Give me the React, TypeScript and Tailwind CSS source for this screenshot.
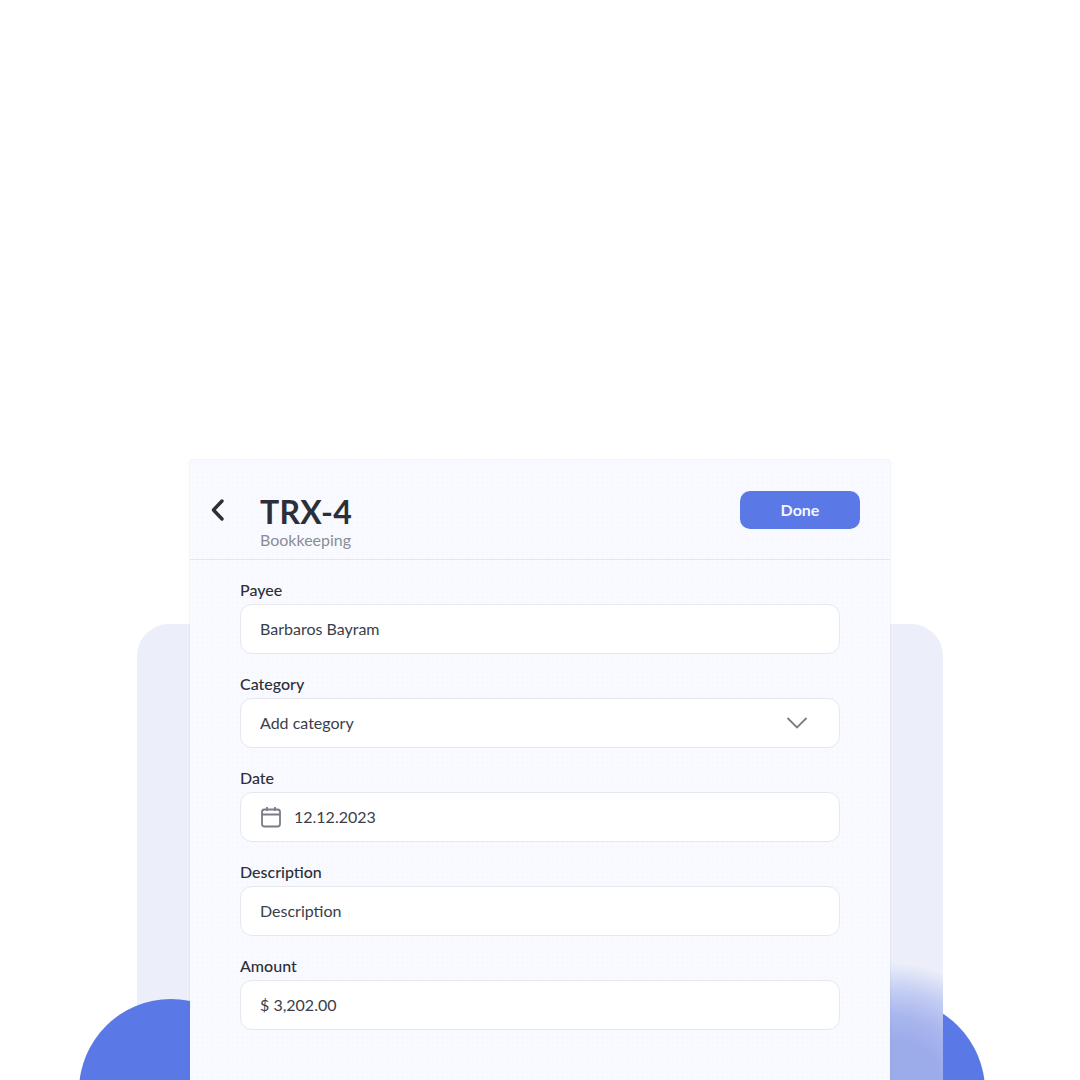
import React from "react";

function Field({ label, children }: { label: string; children: React.ReactNode }) {
  return (
    <div className="flex flex-col">
      <label className="h-[30px] pt-[4px] text-[16px] leading-[24px] font-medium text-[#2b2f3a]">{label}</label>
      <div className="flex h-[50px] w-[600px] items-center rounded-[12px] border border-[#e6e8f0] bg-white px-[19px] text-[16px] text-[#3a3e49]">
        {children}
      </div>
    </div>
  );
}

export default function App() {
  return (
    <div className="relative h-[1080px] w-[1080px] overflow-hidden bg-white font-['Lato',sans-serif]">
      <div className="absolute left-[137px] top-[624px] h-[500px] w-[806px] rounded-[32px] bg-[#eceff9]" />
      <div className="absolute left-[79px] top-[999px] h-[184px] w-[184px] rounded-full bg-[#5a78e6]" />
      <div className="absolute left-[801px] top-[999px] h-[184px] w-[184px] rounded-full bg-[#5a78e6]" />
      <div className="absolute left-[890px] top-[960px] h-[120px] w-[53px] bg-[radial-gradient(circle_at_3px_131px,#9cabea_0px,#9cabea_50px,#a9b6ee_75px,#c3ccf3_100px,#eceff9_128px)]" />
      <div className="relative flex justify-center pt-[460px]">
        <div className="h-[620px] w-[700px] rounded-t-[3px] bg-[#f9faff] bg-[radial-gradient(#eff1fb_0.7px,transparent_0.9px)] bg-[length:5px_5px] shadow-[0_0_2px_rgba(120,125,160,0.28)]">
          <div className="flex h-[100px] items-start border-b border-[#e4e6ef] pl-[19px] pr-[30px]">
            <svg width="18" height="24" viewBox="0 0 18 24" fill="none" className="mt-[39px]">
              <path d="M13 2 L4.5 11 L13 20" stroke="#2b2f3a" strokeWidth="3.4" strokeLinecap="round" strokeLinejoin="round" />
            </svg>
            <div className="ml-[33px] flex flex-col pt-[32px]">
              <span className="text-[32px] leading-[40px] font-bold tracking-[0.2px] text-[#2b2f3a]">TRX-4</span>
              <span className="mt-[-2px] text-[16px] leading-[20px] text-[#8a8d96]">Bookkeeping</span>
            </div>
            <button className="ml-auto mt-[31px] h-[38px] w-[120px] rounded-[10px] bg-[#5a78e6] text-[16px] font-bold text-[#f4f6fe]">
              Done
            </button>
          </div>
          <div className="flex flex-col items-center gap-[14px] pt-[14px]">
            <Field label="Payee">Barbaros Bayram</Field>
            <Field label="Category">
              <span className="flex-1">Add category</span>
              <svg width="22" height="14" viewBox="0 0 22 14" fill="none" className="mr-[12px]">
                <path d="M1.5 2 L11 11.5 L20.5 2" stroke="#7a7d85" strokeWidth="1.8" />
              </svg>
            </Field>
            <Field label="Date">
              <svg width="22" height="22" viewBox="0 0 22 22" fill="none" className="mr-[12px]">
                <rect x="2" y="3.5" width="18" height="17" rx="2.5" stroke="#7a7d85" strokeWidth="1.8" />
                <path d="M2 8.5 H20 M7 1 V5 M15 1 V5" stroke="#7a7d85" strokeWidth="1.8" />
              </svg>
              12.12.2023
            </Field>
            <Field label="Description">Description</Field>
            <Field label="Amount">$ 3,202.00</Field>
          </div>
        </div>
      </div>
    </div>
  );
}
